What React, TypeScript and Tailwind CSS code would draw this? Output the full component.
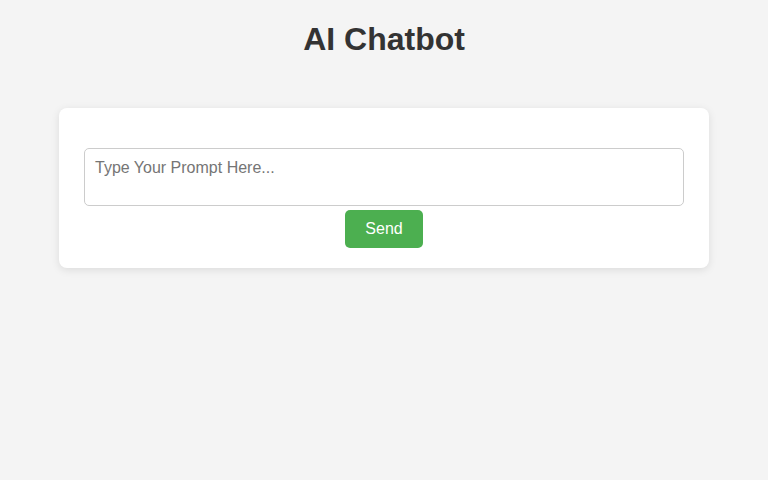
import { useState } from "react";

// App
export default function App() {
  const [prompt, setPrompt] = useState("");

  return (
    <main className="min-h-screen bg-[#f4f4f4] font-['Liberation_Sans',Arial,sans-serif] text-[#333]">
      <h1 className="pt-[21px] text-center text-[32px] font-bold leading-[37px] text-[#333]">
        AI Chatbot
      </h1>

      <section className="mx-auto mt-[50px] w-[650px] rounded-lg bg-white px-[25px] pb-5 pt-10 shadow-[0_2px_8px_rgba(0,0,0,0.1)]">
        <textarea
          value={prompt}
          onChange={(e) => setPrompt(e.target.value)}
          placeholder="Type Your Prompt Here..."
          className="block h-[58px] w-[600px] resize-none rounded-[5px] border border-[#ccc] p-[10px] text-base leading-[18px] text-[#333] placeholder:text-[#757575] focus:outline-none"
        />
        <div className="mt-1 flex justify-center">
          <button className="h-[38px] rounded-[5px] bg-[#4caf50] px-5 text-base leading-[18px] text-white">
            Send
          </button>
        </div>
      </section>
    </main>
  );
}
